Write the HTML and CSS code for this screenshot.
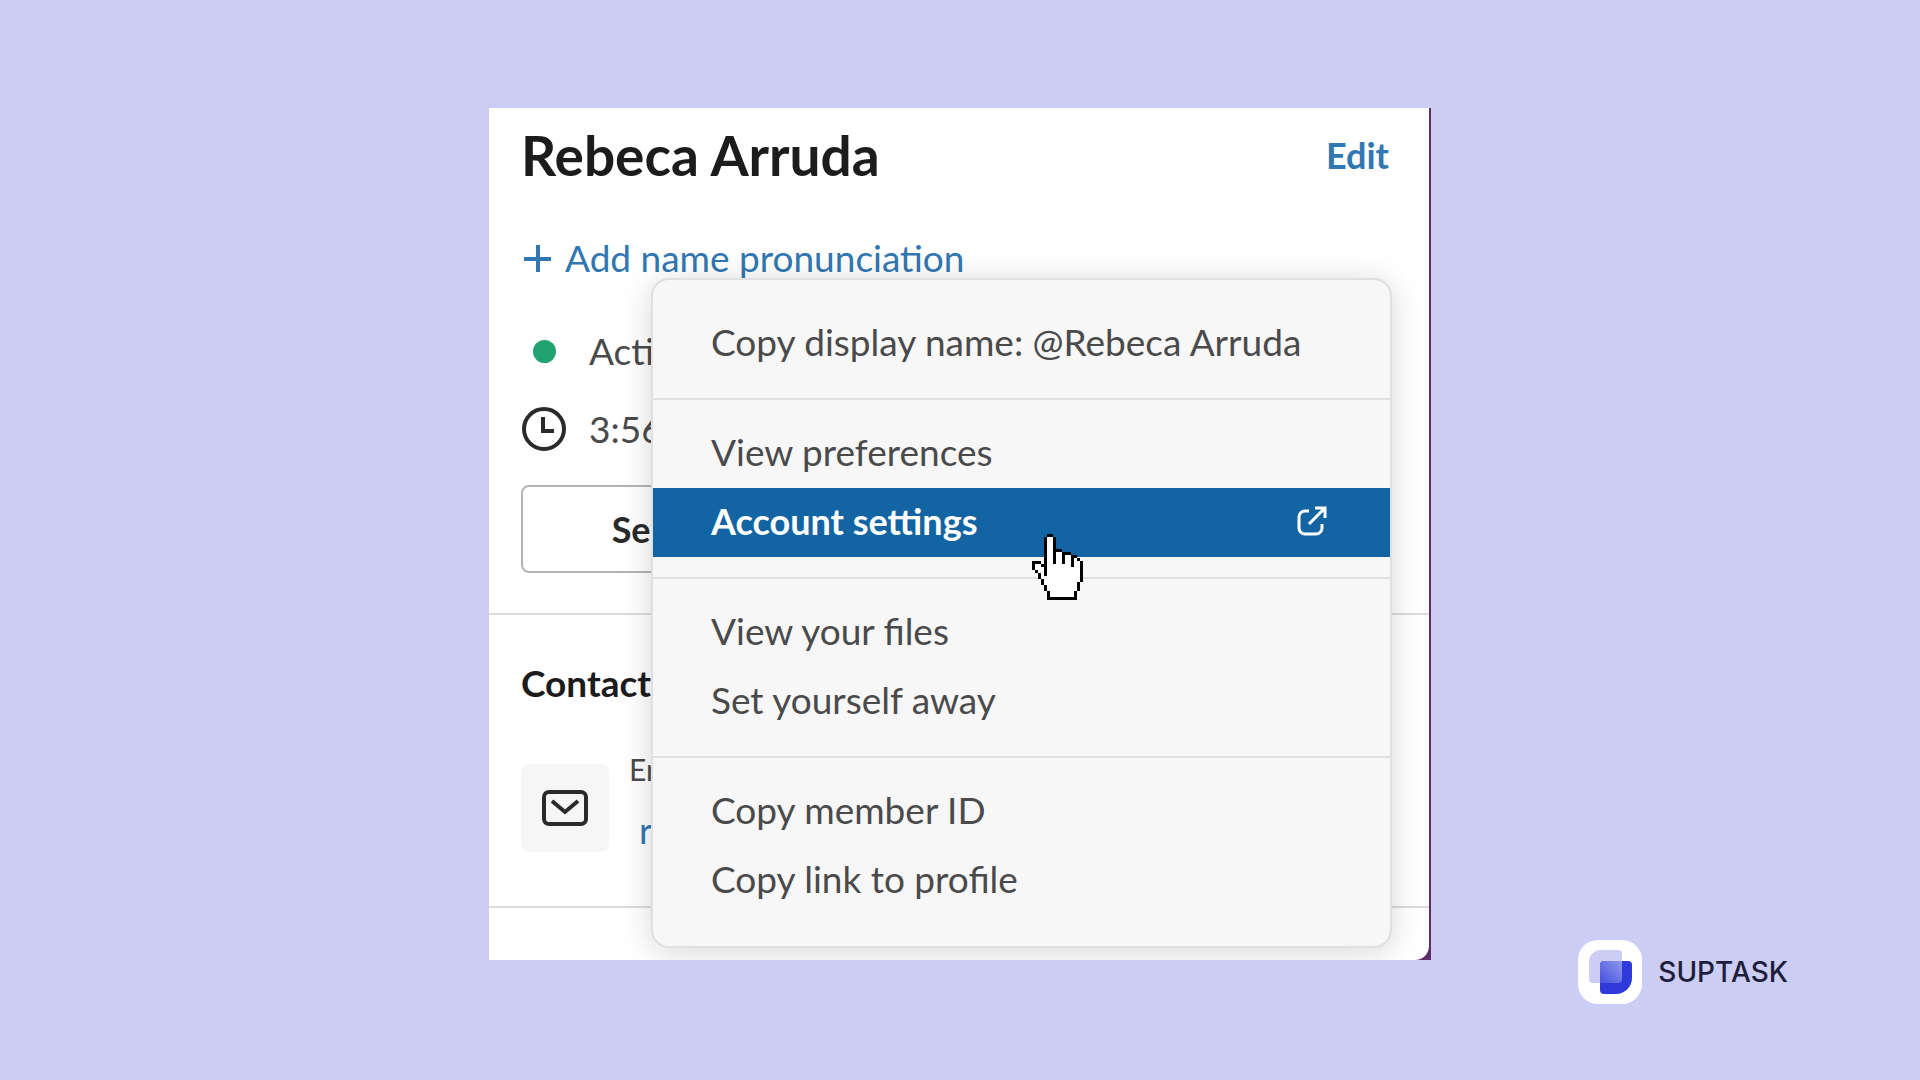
FILE: index.html
```html
<!DOCTYPE html>
<html lang="en">
<head>
    <meta charset="UTF-8">
    <meta name="viewport" content="width=device-width, initial-scale=1.0">
    <title>Rebeca Arruda - Profile</title>
    <link rel="stylesheet" href="styles.css">
</head>
<body>
    <!-- Profile panel -->
    <main class="panel">
        <div class="panel-body">
            <section class="profile">
                <div class="profile-header">
                    <h1>Rebeca Arruda</h1>
                    <a href="#" class="edit-link">Edit</a>
                </div>
                <a href="#" class="add-link">
                    <svg width="32" height="32" viewBox="0 0 32 32" aria-hidden="true">
                        <path d="M17 3v27M3 17h27" stroke="currentColor" stroke-width="4" fill="none"/>
                    </svg>
                    Add name pronunciation
                </a>
                <div class="status-row">
                    <span class="status-icon"><span class="dot"></span></span>
                    <span>Active</span>
                </div>
                <div class="status-row">
                    <svg class="status-icon" width="46" height="46" viewBox="0 0 46 46" aria-hidden="true">
                        <circle cx="23" cy="23" r="20" stroke="#2a2a2b" stroke-width="4" fill="none"/>
                        <path d="M22 11v14h11" stroke="#2a2a2b" stroke-width="4" fill="none"/>
                    </svg>
                    <span>3:56 PM</span>
                </div>
                <button type="button" class="status-button">Set a status</button>
            </section>

            <section class="contact">
                <h2>Contact</h2>
                <div class="contact-row">
                    <span class="mail-icon">
                        <svg width="46" height="36" viewBox="0 0 46 36" aria-hidden="true">
                            <rect x="2" y="2" width="42" height="32" rx="5" stroke="#2a2a2b" stroke-width="4" fill="none"/>
                            <path d="M10 11l13 11 13-11" stroke="#2a2a2b" stroke-width="4" fill="none"/>
                        </svg>
                    </span>
                    <div class="contact-text">
                        <span class="contact-label">Email</span>
                        <a href="#" class="contact-mail">rebeca</a>
                    </div>
                </div>
            </section>
        </div>

        <!-- Context menu -->
        <div class="menu">
            <div class="menu-group">
                <button type="button" class="menu-item">Copy display name: @Rebeca Arruda</button>
            </div>
            <div class="menu-group">
                <button type="button" class="menu-item">View preferences</button>
                <button type="button" class="menu-item active">
                    Account settings
                    <svg width="32" height="32" viewBox="0 0 32 32" aria-hidden="true">
                        <path d="M13 6H9a6 6 0 0 0-6 6v11a6 6 0 0 0 6 6h11a6 6 0 0 0 6-6v-4M13 19L28 4M19 3h10v10" stroke="currentColor" stroke-width="3" fill="none"/>
                    </svg>
                </button>
            </div>
            <div class="menu-group">
                <button type="button" class="menu-item">View your files</button>
                <button type="button" class="menu-item">Set yourself away</button>
            </div>
            <div class="menu-group">
                <button type="button" class="menu-item">Copy member ID</button>
                <button type="button" class="menu-item">Copy link to profile</button>
            </div>
        </div>

        <svg class="cursor" width="51" height="66" viewBox="0 0 17 22" shape-rendering="crispEdges" aria-hidden="true">
            <path d="M5 1h2v4h3v1h3v1h2v1h1v1h1v7h-1v3h-1v2H6v-2H5v-2H4v-2H3v-2H2v-1H1v-3h2v1h1v1h1z" fill="#fff"/>
            <path d="M5 0h2v1h-2zM4 1h1v13h-1zM7 1h1v9h-1zM8 5h2v1h-2zM10 6h1v4h-1zM11 6h2v1h-2zM13 7h1v4h-1zM14 7h1v1h-1zM15 8h1v1h-1zM16 9h1v7h-1zM15 16h1v3h-1zM14 19h1v3h-1zM5 21h9v1h-9zM5 19h1v2h-1zM4 17h1v2h-1zM3 15h1v2h-1zM2 13h1v2h-1zM1 12h1v1h-1zM0 9h1v3h-1zM1 9h2v1h-2zM3 10h1v1h-1z"/>
        </svg>
    </main>

    <!-- Brand -->
    <footer class="brand">
        <svg width="64" height="64" viewBox="0 0 64 64" aria-hidden="true">
            <defs>
                <linearGradient id="overlap" x1="0" y1="1" x2="1" y2="0">
                    <stop offset="0" stop-color="#4650dc"/>
                    <stop offset="1" stop-color="#8f97ee"/>
                </linearGradient>
            </defs>
            <rect width="64" height="64" rx="20" fill="#fff"/>
            <path d="M23 10h17a4 4 0 0 1 4 4v25a4 4 0 0 1-4 4H15a4 4 0 0 1-4-4V22a12 12 0 0 1 12-12z" fill="#cbcdf5"/>
            <path d="M26 21h24a4 4 0 0 1 4 4v13a16 16 0 0 1-16 16H26a4 4 0 0 1-4-4V25a4 4 0 0 1 4-4z" fill="#2f38d9"/>
            <path d="M26 21h18v18a4 4 0 0 1-4 4H22V25a4 4 0 0 1 4-4z" fill="url(#overlap)"/>
        </svg>
        <span>SUPTASK</span>
    </footer>
</body>
</html>
```
FILE: styles.css
```css
* {
    box-sizing: border-box;
}

body {
    margin: 0;
    padding-top: 108px;
    font-family: Lato, sans-serif;
    font-size: 37px;
    line-height: 44px;
    color: #4a4a4b;
    background-color: #cccdf5;
}

a {
    color: #3177b2;
    text-decoration: none;
}

button {
    font: inherit;
    color: inherit;
    cursor: pointer;
}

h1, h2 {
    margin: 0;
    color: #1d1c1d;
}

/* Profile panel */
.panel {
    position: relative;
    width: 100%;
    max-width: 942px;
    margin: 0 auto;
    padding-right: 2px;
    background: #5e2c66;
    overflow: hidden;
}

.panel-body {
    padding-bottom: 52px;
    background: #fff;
    border-bottom-right-radius: 14px;
}

.profile {
    display: flex;
    flex-direction: column;
    padding: 15px 40px 40px 32px;
    border-bottom: 2px solid #dddddd;
}

.profile-header {
    display: flex;
    align-items: center;
    justify-content: space-between;
    margin-bottom: 49px;
}

.profile-header h1 {
    font-size: 55px;
    line-height: 64px;
}

.edit-link {
    font-size: 36px;
    font-weight: bold;
}

.add-link {
    display: flex;
    align-items: center;
    gap: 12px;
    margin-bottom: 49px;
}

/* Status rows */
.status-row {
    display: flex;
    align-items: center;
    gap: 22px;
    margin-bottom: 33px;
}

.status-icon {
    display: flex;
    justify-content: center;
    width: 46px;
}

.dot {
    width: 23px;
    height: 23px;
    border-radius: 50%;
    background: #20a271;
}

.status-button {
    width: 366px;
    height: 88px;
    color: #2a2a2b;
    font-size: 36px;
    font-weight: bold;
    background: #fff;
    border: 2px solid #b4b4b4;
    border-radius: 8px;
}

/* Contact information */
.contact {
    padding: 46px 32px 54px;
    border-bottom: 2px solid #dddddd;
}

.contact h2 {
    font-size: 37px;
    line-height: 44px;
}

.contact-row {
    display: flex;
    align-items: flex-end;
    gap: 20px;
    margin-top: 42px;
}

.mail-icon {
    display: flex;
    align-items: center;
    justify-content: center;
    width: 88px;
    height: 88px;
    background: #f6f6f6;
    border-radius: 8px;
}

.contact-text {
    display: flex;
    flex-direction: column;
    gap: 17px;
}

.contact-label {
    font-size: 30px;
}

.contact-mail {
    padding-left: 10px;
}

/* Context menu */
.menu {
    position: absolute;
    top: 170px;
    right: 39px;
    width: 741px;
    padding: 10px 0 11px;
    background: #f7f7f7;
    border: 2px solid #e0e0e0;
    border-radius: 18px;
    box-shadow: 0 4px 32px rgba(0, 0, 0, 0.16);
}

.menu-group {
    padding: 19px 0 20px;
}

.menu-group + .menu-group {
    border-top: 2px solid #e0e0e0;
}

.menu-item {
    display: flex;
    align-items: center;
    justify-content: space-between;
    width: 100%;
    height: 69px;
    padding: 0 62px 4px 58px;
    text-align: left;
    background: none;
    border: none;
}

.menu-item.active {
    color: #fff;
    font-size: 36px;
    font-weight: bold;
    background: #1264a3;
}

.cursor {
    position: absolute;
    top: 426px;
    left: 543px;
}

/* Brand */
.brand {
    display: flex;
    align-items: center;
    justify-content: flex-end;
    gap: 16px;
    margin: -20px 132px 0 0;
    font-family: Inter, sans-serif;
    font-size: 28px;
    font-weight: 500;
    color: #1e1e3c;
}
```
